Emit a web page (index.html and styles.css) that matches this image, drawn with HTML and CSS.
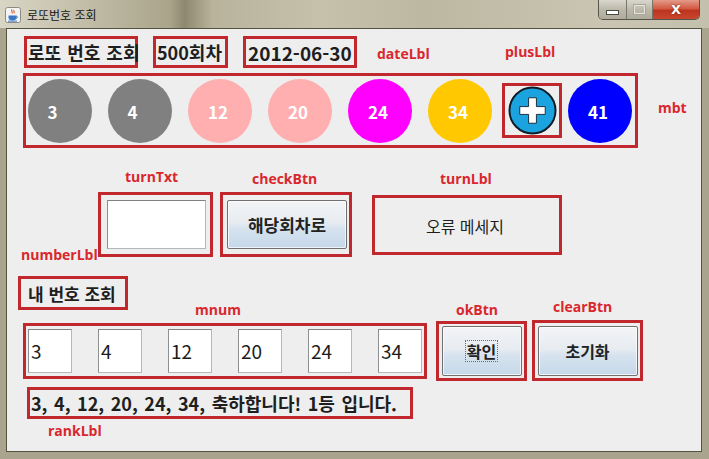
FILE: index.html
```html
<!DOCTYPE html>
<html lang="ko">
<head>
    <meta charset="UTF-8">
    <title>로또번호 조회</title>
    <link rel="stylesheet" href="styles.css">
</head>
<body>
    <div class="titlebar">
        <svg class="app-icon" viewBox="0 0 16 16" width="16" height="16">
            <rect x="0.5" y="0.5" width="15" height="15" rx="2" fill="#f4f4f2" stroke="#8a8a86"/>
            <path d="M7 2.5c-1.5 1.5 1.2 2.3 0 4 M9 3c-1 1 1 1.8 0 3.3" fill="none" stroke="#e2572b" stroke-width="1.1"/>
            <path d="M3.5 8.5h8v2.3c0 1.6-1.6 2.7-4 2.7s-4-1.1-4-2.7z" fill="#3a78c4"/>
            <path d="M11.3 9.2c1.6 0 1.6 2-0.3 2" fill="none" stroke="#3a78c4"/>
            <rect x="3" y="13.6" width="9" height="1" fill="#3a78c4"/>
        </svg>
        <span class="title">로또번호 조회</span>
        <div class="caption">
            <span class="cap cap-min"><i></i></span>
            <span class="cap cap-max"><i></i></span>
            <span class="cap cap-close">X</span>
        </div>
    </div>

    <div class="content">
        <!-- 회차 정보 -->
        <div class="head">
            <div class="box head-title">로또 번호 조회</div>
            <div class="box head-turn">500회차</div>
            <div class="box head-date">2012-06-30</div>
        </div>

        <!-- 당첨 번호 -->
        <div class="box mbt">
            <div class="ball one gray">3</div>
            <div class="ball one gray">4</div>
            <div class="ball pink">12</div>
            <div class="ball pink">20</div>
            <div class="ball magenta">24</div>
            <div class="ball orange">34</div>
            <div class="box plus">
                <svg viewBox="0 0 50 50" width="49" height="49">
                    <circle cx="25" cy="25" r="23.5" fill="#1ba3e0" stroke="#0f1c26" stroke-width="2"/>
                    <path d="M21 12h8v9h9v8h-9v9h-8v-9h-9v-8h9z" fill="#fff" stroke="#1c2d3a" stroke-width="1" stroke-linejoin="round"/>
                </svg>
            </div>
            <div class="ball blue bonus">41</div>
        </div>

        <!-- 회차 검색 -->
        <div class="turn">
            <div class="box turn-txt"><div class="field wide"></div></div>
            <div class="box check-btn"><div class="btn">해당회차로</div></div>
            <div class="box turn-lbl">오류 메세지</div>
        </div>

        <div class="box mine">내 번호 조회</div>

        <!-- 내 번호 -->
        <div class="nums">
            <div class="box mnum">
                <div class="field">3</div>
                <div class="field">4</div>
                <div class="field">12</div>
                <div class="field">20</div>
                <div class="field">24</div>
                <div class="field">34</div>
            </div>
            <div class="box ok-btn"><div class="btn small"><span class="focus">확인</span></div></div>
            <div class="box clear-btn"><div class="btn wide-btn">초기화</div></div>
        </div>

        <div class="box rank">3, 4, 12, 20, 24, 34, 축하합니다! 1등 입니다.</div>

        <!-- 컴포넌트 이름 -->
        <span class="tag tag-date">dateLbl</span>
        <span class="tag tag-plus">plusLbl</span>
        <span class="tag tag-mbt">mbt</span>
        <span class="tag tag-turntxt">turnTxt</span>
        <span class="tag tag-check">checkBtn</span>
        <span class="tag tag-turnlbl">turnLbl</span>
        <span class="tag tag-number">numberLbl</span>
        <span class="tag tag-mnum">mnum</span>
        <span class="tag tag-ok">okBtn</span>
        <span class="tag tag-clear">clearBtn</span>
        <span class="tag tag-rank">rankLbl</span>
    </div>
</body>
</html>
```

FILE: styles.css
```css
body {
    margin: 0;
    width: 709px;
    height: 459px;
    overflow: hidden;
    background: #a8a48e;
    font-family: "Noto Sans CJK KR", "Noto Sans", sans-serif;
    color: #1e1e1e;
}

/* 창 제목 표시줄 */
.titlebar {
    height: 28px;
    display: flex;
    align-items: center;
    background: linear-gradient(90deg, #d9d6c6 0%, #c2bda7 12%, #aaa48b 24%, #8f8870 26%, #b9b39c 30%, #c6c1ab 45%, #bdb8a1 60%, #c9c5b2 85%, #c4c0ae 100%);
}

.app-icon {
    margin-left: 5px;
    margin-top: 1px;
}

.title {
    margin-left: 6px;
    font-size: 12px;
    color: #151515;
}

.caption {
    margin-left: auto;
    margin-right: 9px;
    align-self: flex-start;
    display: flex;
    height: 19px;
    border: 1px solid #55554c;
    border-top: 0;
    border-radius: 0 0 5px 5px;
    overflow: hidden;
}

.cap {
    display: flex;
    align-items: center;
    justify-content: center;
    height: 19px;
    background: linear-gradient(#d9d7cd, #bcb9aa 50%, #aeab9b);
    border-right: 1px solid #77766b;
}

.cap-min { width: 27px; }
.cap-max { width: 25px; }

.cap-min i {
    width: 11px;
    height: 3px;
    margin-top: 5px;
    background: #fff;
    border: 1px solid #4a4a44;
}

.cap-max i {
    width: 9px;
    height: 7px;
    border: 1px solid #e4e2da;
    box-shadow: 0 0 0 1px #a9a79a;
}

.cap-close {
    width: 46px;
    border-right: 0;
    background: linear-gradient(#e39a88, #d35a43 45%, #bd341f 55%, #c8472f);
    color: #fff;
    font-family: "DejaVu Sans", sans-serif;
    font-weight: bold;
    font-size: 13px;
    text-shadow: 0 0 2px #6b1a10;
}

/* 본문 영역 */
.content {
    position: relative;
    height: 422px;
    margin: 0 7px 0 6px;
    border: 1px solid #55533f;
    background: #eeeeee;
}

.box {
    box-sizing: border-box;
    border: 3px solid #c0282e;
    flex-shrink: 0;
}

.head {
    display: flex;
    gap: 15px;
    margin: 7px 0 0 17px;
}

.head .box {
    height: 32px;
    padding-left: 1px;
    display: flex;
    align-items: center;
    font-weight: bold;
    font-size: 18px;
    line-height: 1;
    white-space: nowrap;
}

.head-title { width: 114px; word-spacing: 1px; }
.head-turn { width: 75px; }
.head-date { width: 114px; font-size: 19px !important; padding-left: 2px !important; }

/* 공 모양 번호 */
.mbt {
    width: 615px;
    height: 75px;
    margin: 5px 0 0 16px;
    padding-left: 2px;
    display: flex;
    align-items: center;
}

.ball {
    flex-shrink: 0;
    width: 64px;
    height: 64px;
    box-sizing: border-box;
    border-radius: 50%;
    margin-right: 16px;
    padding-right: 4px;
    padding-top: 1px;
    display: flex;
    align-items: center;
    justify-content: center;
    color: #fff;
    font-weight: bold;
    font-size: 17px;
}

.ball.one { padding-right: 15px; }
.gray { background: #808080; }
.pink { background: #ffafaf; }
.magenta { background: #ff00ff; }
.orange { background: #ffc800; }
.blue { background: #0000ff; }

.orange + .plus { margin-left: -6px; }

.plus {
    width: 60px;
    height: 55px;
    display: flex;
    align-items: center;
    justify-content: center;
    padding-left: 1px;
}

.bonus {
    margin-left: 6px;
    margin-right: 0;
}

/* 회차 검색 줄 */
.turn {
    display: flex;
    align-items: center;
    margin: 44px 0 0 91px;
}

.turn-txt,
.check-btn {
    height: 65px;
    display: flex;
    align-items: center;
    justify-content: center;
}

.turn-txt { width: 115px; padding-left: 2px; }
.check-btn { width: 132px; margin-left: 7px; padding-left: 2px; }

.turn-lbl {
    width: 190px;
    height: 60px;
    margin-left: 20px;
    padding: 3px 4px 0 0;
    display: flex;
    align-items: center;
    justify-content: center;
    font-size: 16px;
}

.field {
    box-sizing: border-box;
    width: 44px;
    height: 44px;
    padding-left: 2px;
    background: #fff;
    border: 1px solid #8d9092;
    border-color: #7f8385 #b5b8ba #b5b8ba #8d9092;
    display: flex;
    align-items: center;
    font-size: 19px;
    color: #1b1b1b;
}

.field.wide {
    width: 99px;
    height: 49px;
}

.btn {
    box-sizing: border-box;
    width: 120px;
    height: 49px;
    border: 1px solid #707070;
    border-radius: 2px;
    box-shadow: inset 0 0 0 1px rgba(255, 255, 255, 0.7);
    background: linear-gradient(#f3f4f6 0%, #e7ecf1 45%, #d6e2ee 60%, #c5d8ea 100%);
    display: flex;
    align-items: center;
    justify-content: center;
    font-weight: bold;
    font-size: 17px;
    color: #222;
}

.btn.small { width: 80px; height: 50px; font-size: 16px; }
.btn.wide-btn { width: 100px; height: 50px; font-size: 16px; }

.focus {
    border: 1px dotted #6c6c6c;
    padding: 0 1px;
    line-height: 20px;
}

.mine {
    width: 110px;
    height: 34px;
    margin: 19px 0 0 11px;
    padding-left: 7px;
    display: flex;
    align-items: center;
    font-weight: bold;
    font-size: 17px;
}

/* 내 번호 입력 줄 */
.nums {
    display: flex;
    align-items: center;
    height: 61px;
    margin: 10px 0 0 16px;
}

.mnum {
    width: 404px;
    height: 56px;
    padding-left: 2px;
    display: flex;
    align-items: center;
    gap: 26px;
}

.ok-btn,
.clear-btn {
    display: flex;
    align-items: center;
    justify-content: center;
}

.ok-btn { width: 91px; height: 60px; margin-left: 9px; }
.clear-btn { width: 111px; height: 61px; margin-left: 5px; }

.rank {
    width: 386px;
    height: 32px;
    margin: 6px 0 0 20px;
    padding-left: 1px;
    display: flex;
    align-items: center;
    font-weight: bold;
    font-size: 18px;
    word-spacing: 1.5px;
    white-space: nowrap;
}

/* 컴포넌트 이름 표시 */
.tag {
    position: absolute;
    font-family: "Open Sans", sans-serif;
    font-weight: bold;
    font-size: 14px;
    line-height: 16px;
    color: #d9272e;
}

.tag-date { left: 370px; top: 17px; }
.tag-plus { left: 498px; top: 15px; }
.tag-mbt { left: 651px; top: 71px; }
.tag-turntxt { left: 118px; top: 140px; }
.tag-check { left: 245px; top: 142px; }
.tag-turnlbl { left: 433px; top: 142px; }
.tag-number { left: 14px; top: 218px; }
.tag-mnum { left: 188px; top: 273px; }
.tag-ok { left: 449px; top: 273px; }
.tag-clear { left: 546px; top: 270px; }
.tag-rank { left: 41px; top: 394px; }
```
